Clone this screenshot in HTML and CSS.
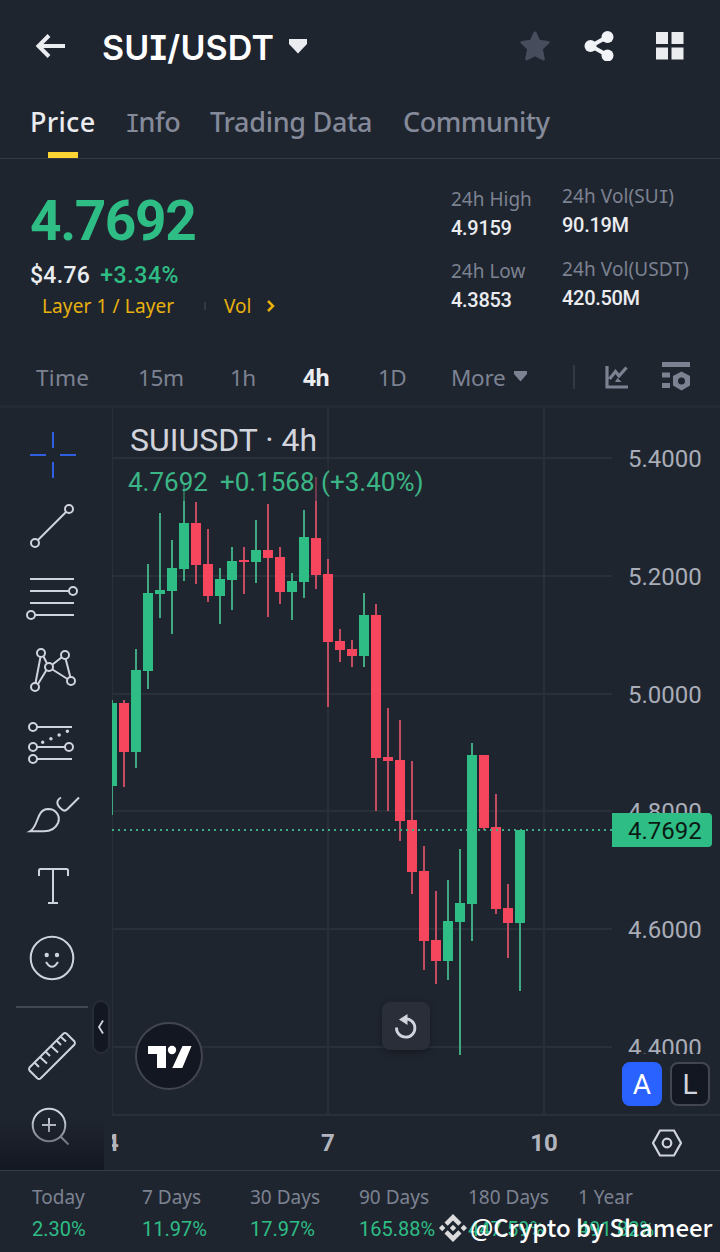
FILE: index.html
```
<!DOCTYPE html>
<html lang="en">
<head>
  <title>SUI/USDT</title>
  <meta charset="UTF-8">
  <meta name="viewport" content="width=device-width,initial-scale=1">
  <link rel="stylesheet" href="styles.css">
</head>
<body>
  <div class="app">
    <header class="topbar">
      <svg class="back" width="30" height="26" viewBox="0 0 30 26"><path d="M30 13H4M14 2.500L3.500 13L14 23.500" fill="none" stroke="#eaecef" stroke-width="4"/></svg>
      <h1>SU<span class="slab">I</span>/USDT</h1>
      <svg class="caret" width="18" height="15" viewBox="0 0 18 15"><path d="M0 0H18V5L9 14.500L0 5Z" fill="#eaecef"/></svg>
      <div class="actions">
        <svg width="30" height="30" viewBox="0 0 30 30"><path d="M15 2L19 10.300L28 11.500L21.300 17.700L23.300 28L15 23.700L6.700 28L8.700 17.700L2 11.500L11 10.300Z" fill="#474d5c" stroke="#474d5c" stroke-width="3" stroke-linejoin="round"/></svg>
        <svg width="30" height="30" viewBox="0 0 30 30"><g fill="#f2f3f6"><circle cx="6.500" cy="15" r="6"/><circle cx="23.500" cy="6" r="6"/><circle cx="23.500" cy="24.500" r="6"/></g><path d="M23 6L7 15L23 24" fill="none" stroke="#f2f3f6" stroke-width="4"/></svg>
        <svg width="28" height="28" viewBox="0 0 28 28"><path d="M0 0H12V12H0ZM15.500 0H27.500V12H15.500ZM0 15.500H12V27.500H0ZM15.500 15.500H27.500V27.500H15.500Z" fill="#eaecef"/></svg>
      </div>
    </header>

    <nav class="tabs">
      <a class="tab active">Price</a>
      <a class="tab tab-info"><span class="slab">I</span>nfo</a>
      <a class="tab tab-data">Trading Data</a>
      <a class="tab tab-community">Community</a>
    </nav>

    <section class="summary">
      <div class="quote">
        <div class="last">4.7692</div>
        <div class="fiat"><span class="usd">$4.76</span><span class="up">+3.34%</span></div>
        <div class="tags">
          <span class="layer">Layer 1 / Layer</span><i></i><span class="vol">Vol</span>
          <svg width="8" height="12" viewBox="0 0 8 12"><path d="M1 1L6 6L1 11" fill="none" stroke="#e8b10e" stroke-width="2.500"/></svg>
        </div>
      </div>
      <dl class="day day-range">
        <dt>24h High</dt><dd>4.9159</dd>
        <dt>24h Low</dt><dd>4.3853</dd>
      </dl>
      <dl class="day day-vol">
        <dt class="sui">24h Vol(SU<span class="slab">I</span>)</dt><dd>90.19M</dd>
        <dt class="usdt">24h Vol(USDT)</dt><dd>420.50M</dd>
      </dl>
    </section>

    <nav class="intervals">
      <a class="i-time">Time</a>
      <a class="i-15m">15m</a>
      <a class="i-1h">1h</a>
      <a class="i-4h active">4h</a>
      <a class="i-1d">1D</a>
      <a class="i-more">More</a>
      <svg class="more-caret" width="13" height="11" viewBox="0 0 13 11"><path d="M0 0H13V3L6.500 10.500L0 3Z" fill="#7c8291"/></svg>
      <i></i>
      <svg class="i-line" width="24" height="24" viewBox="0 0 24 24"><path d="M2 1V22H23M4.500 14L10.500 6.500L14 11L21.500 2.500" fill="none" stroke="#7c8291" stroke-width="3.200"/><path d="M10 17L12.500 13L16.500 17Z" fill="#7c8291"/></svg>
      <svg class="i-settings" width="28" height="29" viewBox="0 0 28 29"><path d="M0 0H28V5H0ZM0 10.500H8V15.500H0ZM0 21H8V26H0Z" fill="#7c8291"/><path d="M19.500 9.500L28 14V23.500L19.500 28.500L11 23.500V14Z" fill="#7c8291"/><circle cx="19.500" cy="19" r="3.500" fill="#1f252f"/></svg>
    </nav>

    <section class="chart">
      <div class="toolbar">
        <svg class="tool cross" viewBox="0 0 104 72"><path d="M53 13V29M53 43V59M30 36H46M60 36H76"/></svg>
        <svg class="tool" viewBox="0 0 104 72"><circle cx="69" cy="18" r="4"/><circle cx="35" cy="52" r="4"/><path d="M38 49L66 21"/></svg>
        <svg class="tool" viewBox="0 0 104 72"><path d="M30 16H74M30 28H69M30 40H74M35 52H74"/><circle cx="73" cy="28" r="4"/><circle cx="31" cy="52" r="4"/></svg>
        <svg class="tool" viewBox="0 0 104 72"><circle cx="41" cy="18" r="4"/><circle cx="65" cy="20" r="4"/><circle cx="49" cy="32" r="4"/><circle cx="35" cy="52" r="4"/><circle cx="71" cy="46" r="4"/><path d="M40.500 22L35.500 48M43.500 21.500L47 28.500M52.500 29.500L61.500 22.500M65.700 24L70.300 42M67.500 44L52.500 34.500M46.500 35L38 49"/></svg>
        <svg class="tool" viewBox="0 0 104 72"><circle cx="33" cy="20" r="4"/><circle cx="33" cy="40" r="4"/><circle cx="69" cy="40" r="4"/><circle cx="33" cy="52" r="4"/><path d="M37 20H72M37 40H65M37 52H72"/><path class="dots" d="M42.700 35.300L67.600 24.200"/></svg>
        <svg class="tool" viewBox="0 0 104 72"><path d="M30 52.300C39 47 36 30.500 48 30C57 30 60.500 38 58 44C55 50.500 50 52.300 44 52.300ZM79 18.500L67.500 30Q64.500 33 62 30.500C56.500 26 55.500 22 61 18.500"/></svg>
        <svg class="tool" viewBox="0 0 104 72"><path d="M39 25V19.500Q39 18 40.500 18H66.500Q68 18 68 19.500V25M53 18V52M48 52H58"/></svg>
        <svg class="tool" viewBox="0 0 104 72"><circle cx="52" cy="35" r="21.300"/><path d="M46 39Q52 48.500 58 39"/><g class="eyes"><circle cx="46.700" cy="32" r="2.200"/><circle cx="57" cy="32" r="2.200"/></g></svg>
        <hr>
        <svg class="tool" viewBox="0 0 104 72"><path d="M29.500 47.500L63.500 13.500Q65 12.500 66.500 13.500L74.500 21.500Q75.500 23 74.500 24.500L40.500 58.500Q39 59.500 37.500 58.500L29.500 50.500Q28.500 49 29.500 47.500ZM35 43L39 47M40.500 37.500L47 43.500M46 32L50 36M51.500 26.500L58 32.500M57 21L61 25M61 17L66 21.500"/></svg>
        <svg class="tool" viewBox="0 0 104 72"><circle cx="49" cy="33" r="16.300"/><path d="M49 26V40M42 33H56M60.500 44.500L68.500 52.500"/></svg>
        <div class="fade"></div>
        <button class="collapse"><svg width="8" height="16" viewBox="0 0 8 16"><path d="M6 1.500L2 8L6 14.500" fill="none" stroke="#d1d4dc" stroke-width="1.800"/></svg></button>
      </div>

      <div class="plot-col">
        <div class="plot">
          <svg id="candles" width="500" height="707" viewBox="112 408 500 707"></svg>
          <div class="legend">
            <div class="symbol">SUIUSDT · 4h</div>
            <div class="change"><span>4.7692</span><span>+0.1568 (+3.40%)</span></div>
          </div>
          <svg class="tv" width="68" height="68" viewBox="0 0 68 68"><circle cx="34" cy="34" r="33" fill="#131722" stroke="#434651" stroke-width="2"/><path d="M13 24H31V46H22V32H13ZM47.500 24H56.500L47.300 46H37.300Z" fill="#fff"/><circle cx="37" cy="28" r="4.200" fill="#fff"/></svg>
          <button class="reset"><svg width="24" height="28" viewBox="0 0 24 28"><path d="M2.500 15.500A9.200 9.200 0 1 0 11 6.800" fill="none" stroke="#d1d4dc" stroke-width="2.800"/><path d="M5 7.500L13.500 2V13Z" fill="#d1d4dc"/></svg></button>
        </div>
        <div class="times"><span>4</span><span>7</span><span>10</span></div>
      </div>

      <div class="axis">
        <div class="prices">
          <span>5.4000</span><span>5.2000</span><span>5.0000</span><span>4.8000</span><span>4.6000</span><span>4.4000</span>
        </div>
        <div class="tag">4.7692</div>
        <div class="modes"><button class="auto">A</button><button>L</button></div>
        <div class="gear"><svg width="30" height="28" viewBox="0 0 30 28"><path d="M8 1.500H22L29 14L22 26.500H8L1 14Z"/><circle cx="15" cy="14" r="4.300"/></svg></div>
      </div>
    </section>

    <footer class="stats">
      <div class="s1"><span>Today</span><b>2.30%</b></div>
      <div class="s2"><span>7 Days</span><b>11.97%</b></div>
      <div class="s3"><span>30 Days</span><b>17.97%</b></div>
      <div class="s4"><span>90 Days</span><b>165.88%</b></div>
      <div class="s5"><span>180 Days</span><b>447.59%</b></div>
      <div class="s6"><span>1 Year</span><b>491.82%</b></div>
    </footer>

    <div class="watermark">
      <svg width="28" height="28" viewBox="0 0 28 28" fill="#dcdcdc"><path d="M14 0L22.500 8.500L19.300 11.700L14 6.400L8.700 11.700L5.500 8.500ZM14 28L5.500 19.500L8.700 16.300L14 21.600L19.300 16.300L22.500 19.500ZM14 10.800L17.200 14L14 17.200L10.800 14ZM3.200 10.800L6.400 14L3.200 17.200L0 14ZM24.800 10.800L28 14L24.800 17.200L21.600 14Z"/></svg>
      <span>@Crypto by Shameer</span>
    </div>
  </div>
  <script src="script.js"></script>
</body>
</html>
```
FILE: styles.css
```
*, *:before, *:after {
  box-sizing: border-box;
}

body {
  margin: 0;
  background: #1f252f;
  color: #eaecef;
  font-family: "Noto Sans", sans-serif;
}

svg {
  display: block;
  flex: none;
}

button {
  padding: 0;
  border: none;
  font: inherit;
  color: inherit;
}

/* capital I with serifs */
.slab {
  margin: 0 -.04em;
  font-family: "DejaVu Sans Mono", monospace;
  line-height: 1;
}

.app {
  position: relative;
  width: 720px;
  height: 1252px;
  overflow: hidden;
}

/* header */
.topbar {
  display: flex;
  align-items: center;
  height: 92px;
  padding: 0 36px 0 35px;
}

.topbar h1 {
  margin: 3px 0 0 37px;
  width: 171px;
  color: #fff;
  font: 600 34px/40px Inter, sans-serif;
  letter-spacing: .15px;
  white-space: nowrap;
}

.caret {
  margin-left: 16px;
}

.actions {
  display: flex;
  align-items: center;
  margin-left: auto;
}

.actions svg + svg {
  margin-left: 34px;
}

.actions svg:last-child {
  margin-left: 42px;
}

.tabs {
  display: flex;
  height: 67px;
  padding-left: 30px;
  border-bottom: 1px solid #333943;
  color: #848a99;
  font-size: 27px;
  font-weight: 500;
  line-height: 60px;
}

.tab {
  position: relative;
  white-space: nowrap;
}

.tab.active {
  width: 96px;
  color: #eaecef;
  letter-spacing: .3px;
}

.tab.active::after {
  position: absolute;
  left: 18px;
  bottom: 0;
  width: 30px;
  height: 6px;
  background: #fcd535;
  content: "";
}

.tab-info {
  width: 84px;
  letter-spacing: -.5px;
}

.tab-info .slab {
  font-size: 25px;
}

.tab-data {
  width: 193px;
  letter-spacing: -.3px;
}

.tab-community {
  letter-spacing: -.45px;
}

/* price summary */
.summary {
  display: flex;
  height: 189px;
  padding-left: 30px;
}

.quote {
  width: 421px;
  padding-top: 30px;
}

.last {
  color: #2ebd85;
  font: 700 55px/64px Roboto, sans-serif;
  letter-spacing: -1.400px;
}

.fiat {
  display: flex;
  gap: 10px;
  margin-top: 8px;
  font: 500 23px/30px Roboto, sans-serif;
  letter-spacing: .3px;
}

.up {
  color: #2ebd85;
  letter-spacing: .6px;
}

.tags {
  display: flex;
  align-items: center;
  margin: 1px 0 0 12px;
  color: #e8b10e;
  font-size: 19px;
  line-height: 28px;
}

.layer {
  width: 132px;
  letter-spacing: .12px;
  white-space: nowrap;
}

.tags i {
  width: 2px;
  height: 8px;
  margin: 0 18px 0 30px;
  background: #333943;
}

.vol {
  width: 43px;
}

.day {
  width: 111px;
  margin: 0;
  padding-top: 27px;
}

.day-vol {
  padding-top: 24px;
}

.day dt {
  color: #7c8291;
  font-size: 19px;
  line-height: 27px;
  white-space: nowrap;
}

.day .slab {
  font-size: 18px;
}

.day .sui {
  letter-spacing: .1px;
}

.day .usdt {
  letter-spacing: .1px;
}

.day dd {
  margin: 0 0 15px;
  font: 500 20px/30px Roboto, sans-serif;
  letter-spacing: -.3px;
}

.day-vol dd {
  margin-bottom: 16px;
}

/* interval bar */
.intervals {
  display: flex;
  align-items: center;
  height: 60px;
  padding-left: 36px;
  border-bottom: 3px solid #252b35;
  color: #7c8291;
  font-size: 22.500px;
}

.intervals a {
  padding-top: 1px;
}

.intervals .active {
  color: #eaecef;
  font-weight: 700;
}

.i-time { width: 102px; letter-spacing: .3px; }
.i-15m { width: 92px; letter-spacing: -.4px; }
.i-1h { width: 73px; letter-spacing: -.6px; }
.i-4h { width: 75px; letter-spacing: -.5px; }
.i-1d { width: 73px; letter-spacing: -.5px; }
.i-more { width: 63px; letter-spacing: -.3px; }

.intervals i {
  width: 2px;
  height: 24px;
  margin: 0 30px 0 46px;
  background: #333943;
}

.i-settings {
  margin-left: 33px;
}

/* chart */
.chart {
  display: flex;
  height: 762px;
}

.toolbar {
  position: relative;
  width: 112px;
  padding-top: 11px;
}

.tool {
  width: 104px;
  height: 72px;
  fill: none;
  stroke: #cfd3dc;
  stroke-width: 2;
}

.cross {
  stroke: #2f5fe0;
}

.dots {
  stroke-width: 3.500;
  stroke-dasharray: 0 9;
  stroke-linecap: round;
}

.tool .eyes {
  fill: #cfd3dc;
  stroke: none;
}

.toolbar hr {
  width: 72px;
  height: 2px;
  margin: 11px 0 12px 16px;
  border: none;
  background: #434852;
}

.fade {
  position: absolute;
  left: 0;
  bottom: 0;
  width: 104px;
  height: 54px;
  background: linear-gradient(rgba(19,23,34,0), #131722);
}

.collapse {
  position: absolute;
  left: 92px;
  top: 592px;
  display: flex;
  align-items: center;
  justify-content: center;
  width: 18px;
  height: 54px;
  border: 2px solid #272c37;
  border-radius: 9px;
  background: #131722;
}

.plot-col {
  width: 500px;
}

.plot {
  position: relative;
  height: 708px;
  border-bottom: 2px solid #2a303a;
}

.legend {
  position: absolute;
  left: 12px;
  top: 12px;
  padding: 0 6px;
  font-family: Roboto, sans-serif;
  white-space: nowrap;
}

.symbol {
  color: #d1d4dc;
  font-size: 32px;
  line-height: 40px;
}

.change {
  display: flex;
  gap: 12px;
  margin: 3px 0 0 -2px;
  background: rgba(31,37,47,.5);
  color: #3bb585;
  font-size: 26px;
  line-height: 38px;
}

.tv {
  position: absolute;
  left: 23px;
  top: 614px;
}

.reset {
  position: absolute;
  left: 270px;
  top: 594px;
  display: flex;
  align-items: center;
  justify-content: center;
  width: 48px;
  height: 48px;
  border-radius: 8px;
  background: #2a2e39;
  box-shadow: 0 2px 6px rgba(0,0,0,.35);
}

.times {
  display: flex;
  justify-content: space-between;
  width: 500px;
  overflow: hidden;
  color: #b2b5be;
  font: 700 24px/54px Roboto, sans-serif;
}

.times span {
  width: 60px;
  text-align: center;
}

.times span:first-child {
  margin-left: -30px;
}

.times span:last-child {
  margin-right: 38px;
}

.axis {
  position: relative;
  width: 108px;
  font-family: Roboto, sans-serif;
}

.prices {
  height: 646px;
  overflow: hidden;
  color: #a9adb7;
  font-size: 24px;
}

.prices span {
  display: block;
  height: 117.800px;
  padding-left: 16px;
  line-height: 117.800px;
}

.prices span:first-child {
  margin-top: -7px;
}

.tag {
  position: absolute;
  left: 0;
  top: 405px;
  width: 100px;
  height: 34px;
  padding-left: 16px;
  border-radius: 0 4px 4px 0;
  background: #2ebd85;
  color: #0b1a14;
  font-size: 24px;
  line-height: 36px;
}

.modes {
  display: flex;
  gap: 8px;
  height: 62px;
  padding: 8px 10px;
  border-bottom: 2px solid #2a303a;
}

.modes button {
  width: 40px;
  height: 44px;
  border: 2px solid #434651;
  border-radius: 8px;
  background: #131722;
  color: #d1d4dc;
  font-size: 28px;
}

.modes .auto {
  border-color: #2962ff;
  background: #2962ff;
  color: #fff;
}

.gear {
  display: flex;
  justify-content: center;
  padding: 13px 0 0 2px;
}

.gear svg {
  fill: none;
  stroke: #d1d4dc;
  stroke-width: 2.200;
}

/* performance row */
.stats {
  display: flex;
  height: 82px;
  padding: 11px 0 0 32px;
  border-top: 1px solid #363c47;
}

.stats span,
.stats b {
  display: block;
  white-space: nowrap;
}

.stats span {
  color: #7c8291;
  font-size: 19px;
  line-height: 30px;
}

.stats b {
  color: #2ebd85;
  font: 400 20px/34px Roboto, sans-serif;
}

.s1 { width: 110px; }
.s2 { width: 108px; }
.s3 { width: 109px; }
.s4 { width: 109px; }
.s5 { width: 110px; }

.watermark {
  position: absolute;
  left: 439px;
  bottom: 5px;
  display: flex;
  align-items: center;
  gap: 3px;
  color: #fff;
  font: 500 24px/40px "Noto Sans CJK SC", sans-serif;
  white-space: nowrap;
}

.watermark svg {
  margin-top: 2px;
}
```
FILE: script.js
```
// [direction, high, body top, body bottom, low]
const candles = [
  ['u', 700, 703, 786, 815],
  ['d', 700, 703, 752, 787],
  ['u', 649, 670, 752, 768],
  ['u', 564, 593, 671, 689],
  ['u', 513, 590, 594, 618],
  ['u', 540, 568, 591, 634],
  ['u', 485, 523, 569, 581],
  ['d', 502, 523, 565, 584],
  ['d', 529, 564, 596, 602],
  ['u', 568, 579, 596, 624],
  ['u', 547, 561, 580, 610],
  ['d', 547, 560, 562, 594],
  ['u', 520, 550, 562, 583],
  ['d', 504, 550, 558, 617],
  ['d', 547, 557, 592, 604],
  ['u', 573, 581, 592, 620],
  ['u', 510, 537, 582, 598],
  ['d', 477, 538, 575, 589],
  ['d', 559, 574, 642, 707],
  ['d', 629, 641, 650, 662],
  ['d', 640, 649, 656, 667],
  ['u', 593, 615, 656, 667],
  ['d', 604, 615, 758, 811],
  ['d', 708, 757, 761, 811],
  ['d', 720, 760, 821, 841],
  ['d', 761, 820, 872, 894],
  ['d', 846, 871, 941, 970],
  ['d', 891, 940, 961, 984],
  ['u', 880, 921, 961, 980],
  ['u', 849, 903, 922, 1055],
  ['u', 743, 755, 904, 941],
  ['d', 755, 755, 828, 830],
  ['d', 794, 827, 909, 914],
  ['d', 884, 908, 923, 958],
  ['u', 830, 830, 923, 991]
];

const body = { u: '#2ebd85', d: '#f6465d' };
const wick = { u: '#41a981', d: '#c34c62' };

let out = '';
[458, 576, 694, 811, 929, 1047].forEach(y => {
  out += `<path d="M112 ${y}H612" stroke="#2a303a" stroke-width="2"/>`;
});
[112, 328, 544].forEach(x => {
  out += `<path d="M${x} 408V1115" stroke="#2a303a" stroke-width="2"/>`;
});
candles.forEach(([dir, high, top, bottom, low], i) => {
  const x = 112 + i * 12;
  out += `<rect x="${x - 1}" y="${high}" width="2" height="${low - high}" fill="${wick[dir]}"/>`;
  out += `<rect x="${x - 5}" y="${top}" width="10" height="${bottom - top}" fill="${body[dir]}"/>`;
});
out += '<path d="M112 830H612" stroke="#3fae85" stroke-width="2" stroke-dasharray="2 4"/>';

document.getElementById('candles').innerHTML = out;
```
